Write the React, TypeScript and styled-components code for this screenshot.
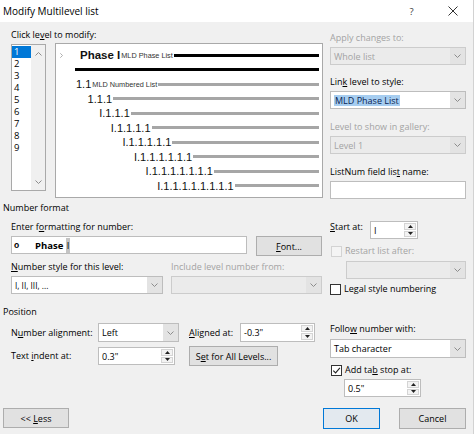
import React from 'react';
import styled, { createGlobalStyle } from 'styled-components';

const GlobalStyle = createGlobalStyle`
  html, body {
    margin: 0;
    padding: 0;
    background: #ffffff;
  }
  *, *::before, *::after {
    box-sizing: border-box;
  }
`;

type PreviewRowData = { level: number; number: string; style?: string };

const LEVELS: Array<string> = ['1', '2', '3', '4', '5', '6', '7', '8', '9'];

const PREVIEW_ROWS: Array<PreviewRowData> = [
  { level: 2, number: '1.1', style: 'MLD Numbered List' },
  { level: 3, number: '1.1.1' },
  { level: 4, number: 'I.1.1.1' },
  { level: 5, number: 'I.1.1.1.1' },
  { level: 6, number: 'I.1.1.1.1.1' },
  { level: 7, number: 'I.1.1.1.1.1.1' },
  { level: 8, number: 'I.1.1.1.1.1.1.1' },
  { level: 9, number: 'I.1.1.1.1.1.1.1.1' },
];

// small drawn glyphs
const Chevron = ({ up }: { up?: boolean }) => (
  <svg width="7" height="4" viewBox="0 0 7 4">
    <path
      d={up ? 'M0.5 3.5 L3.5 0.5 L6.5 3.5' : 'M0.5 0.5 L3.5 3.5 L6.5 0.5'}
      fill="none"
      stroke="#8c8c8c"
      strokeWidth="1"
    />
  </svg>
);

const Triangle = ({ up }: { up?: boolean }) => (
  <svg width="5" height="3" viewBox="0 0 5 3">
    <path d={up ? 'M0 3 L2.5 0 L5 3Z' : 'M0 0 L2.5 3 L5 0Z'} fill="#222" />
  </svg>
);

const CheckMark = () => (
  <svg width="9" height="9" viewBox="0 0 9 9">
    <path d="M1.3 4.6 L3.6 6.9 L7.9 1.8" fill="none" stroke="#222" strokeWidth="1.1" />
  </svg>
);

const CloseIcon = () => (
  <svg width="10" height="10" viewBox="0 0 10 10">
    <path d="M0.5 0.5 L9.5 9.5 M9.5 0.5 L0.5 9.5" stroke="#333" strokeWidth="1" />
  </svg>
);

const RightCaret = () => (
  <svg width="3" height="5" viewBox="0 0 3 5">
    <path d="M0.3 0.3 L2.5 2.5 L0.3 4.7" fill="none" stroke="#9a9a9a" strokeWidth="0.8" />
  </svg>
);

const ComboBox: React.FC<{ width: number; height?: number; disabled?: boolean; children?: React.ReactNode }> = ({
  width,
  height = 18,
  disabled,
  children,
}) => (
  <Combo $w={width} $h={height} $disabled={disabled}>
    <ComboValue $disabled={disabled}>{children}</ComboValue>
    <ComboArrow>
      <Chevron />
    </ComboArrow>
  </Combo>
);

const Spinner: React.FC<{ width: number; height?: number; value: string }> = ({ width, height = 18, value }) => (
  <Spin $w={width} $h={height}>
    <SpinValue>{value}</SpinValue>
    <SpinButtons>
      <SpinButton>
        <Triangle up />
      </SpinButton>
      <SpinButton>
        <Triangle />
      </SpinButton>
    </SpinButtons>
  </Spin>
);

const App: React.FC = () => {
  return (
    <>
      <GlobalStyle />
      <Dialog>
        <TitleBar>
          <Title>Modify Multilevel list</Title>
          <CaptionButton>?</CaptionButton>
          <CaptionButton>
            <CloseIcon />
          </CaptionButton>
        </TitleBar>

        <Body>
          <Section $top={7}>
            <Pane $w={312}>
              <Label>
                Click le<Key>v</Key>el to modify:
              </Label>
              <LevelArea>
                <LevelList>
                  <LevelItems>
                    {LEVELS.map((level, index) => (
                      <LevelItem key={level} $selected={index === 0}>
                        {level}
                      </LevelItem>
                    ))}
                  </LevelItems>
                  <ListScroll>
                    <Chevron up />
                    <Chevron />
                  </ListScroll>
                </LevelList>

                <Preview>
                  <PreviewRow $indent={4}>
                    <CaretBox>
                      <RightCaret />
                    </CaretBox>
                    <PhaseText>Phase I</PhaseText>
                    <StyleTag>MLD Phase List</StyleTag>
                    <Rule $heavy />
                  </PreviewRow>
                  <PreviewRow $indent={18}>
                    <Rule $heavy />
                  </PreviewRow>
                  {PREVIEW_ROWS.map((row) => (
                    <PreviewRow key={row.level} $indent={20 + (row.level - 2) * 11.6}>
                      <NumberText>{row.number}</NumberText>
                      {row.style && <StyleTag>{row.style}</StyleTag>}
                      <Rule />
                    </PreviewRow>
                  ))}
                </Preview>
              </LevelArea>
            </Pane>

            <SideColumn>
              <Field $top={3}>
                <Label $disabled>Apply changes to:</Label>
                <ComboBox width={136} disabled>
                  Whole list
                </ComboBox>
              </Field>
              <Field $top={11}>
                <Label>
                  Lin<Key>k</Key> level to style:
                </Label>
                <ComboBox width={136}>
                  <Selected>MLD Phase List</Selected>
                </ComboBox>
              </Field>
              <Field $top={12}>
                <Label $disabled>Level to show in gallery:</Label>
                <ComboBox width={136} disabled>
                  Level 1
                </ComboBox>
              </Field>
              <Field $top={12}>
                <Label>
                  ListNum field lis<Key>t</Key> name:
                </Label>
                <TextBox $w={136} />
              </Field>
            </SideColumn>
          </Section>

          <GroupHeading $top={3}>Number format</GroupHeading>

          <Section $top={7}>
            <Pane $w={311}>
              <Label>
                Enter f<Key>o</Key>rmatting for number:
              </Label>
              <FormatRow>
                <TextBox $w={236}>
                  <Bullet>o</Bullet>
                  <FormatText>
                    Phase <Shaded>I</Shaded>
                  </FormatText>
                </TextBox>
                <Button $w={66} $h={20}>
                  <span>
                    <Key>F</Key>ont...
                  </span>
                </Button>
              </FormatRow>
              <StyleGrid>
                <Label>
                  <Key>N</Key>umber style for this level:
                </Label>
                <Label $disabled>Include level number from:</Label>
                <ComboBox width={152}>
                  <SmallValue>I, II, III, ...</SmallValue>
                </ComboBox>
                <ComboBox width={151} disabled />
              </StyleGrid>
            </Pane>

            <SideColumn>
              <StartRow>
                <Label $w={40}>
                  <Key>S</Key>tart at:
                </Label>
                <Spinner width={48} value="I" />
              </StartRow>
              <CheckRow $top={6} $shift={1}>
                <Box $disabled />
                <Label $disabled>Restart list after:</Label>
              </CheckRow>
              <Indented $left={16} $top={4}>
                <ComboBox width={120} disabled />
              </Indented>
              <CheckRow $top={4}>
                <Box />
                <Label>
                  Le<Key>g</Key>al style numbering
                </Label>
              </CheckRow>
            </SideColumn>
          </Section>

          <GroupHeading $top={11}>Position</GroupHeading>

          <Section $top={5}>
            <PositionGrid>
              <Label>
                N<Key>u</Key>mber alignment:
              </Label>
              <ComboBox width={81} height={19}>
                Left
              </ComboBox>
              <Label>
                <Key>A</Key>ligned at:
              </Label>
              <Spinner width={75} height={19} value={'-0.3"'} />

              <Label>
                Text <Key>i</Key>ndent at:
              </Label>
              <Spinner width={77} value={'0.3"'} />
              <WideCell>
                <Button $w={89} $h={20}>
                  <span>
                    S<Key>e</Key>t for All Levels...
                  </span>
                </Button>
              </WideCell>
            </PositionGrid>

            <SideColumn>
              <Label>
                Follo<Key>w</Key> number with:
              </Label>
              <Indented $top={4}>
                <ComboBox width={136} height={19}>
                  Tab character
                </ComboBox>
              </Indented>
              <CheckRow $top={6} $shift={1}>
                <Box>
                  <CheckMark />
                </Box>
                <Label>
                  Add ta<Key>b</Key> stop at:
                </Label>
              </CheckRow>
              <Indented $left={14} $top={3}>
                <Spinner width={77} value={'0.5"'} />
              </Indented>
            </SideColumn>
          </Section>

          <Footer>
            <Button $w={66} $h={20}>
              <ButtonText>
                {'<< '}
                <Key>L</Key>ess
              </ButtonText>
            </Button>
            <FooterActions>
              <Button $w={57} $h={21} $default>
                OK
              </Button>
              <Button $w={67} $h={21}>
                Cancel
              </Button>
            </FooterActions>
          </Footer>
        </Body>
      </Dialog>
    </>
  );
};

const Dialog = styled.div`
  display: flex;
  flex-direction: column;
  width: 474px;
  height: 434px;
  overflow: hidden;
  border-right: 1px solid #d2d2d2;
  background-color: #f0f0f0;
  color: #000000;
  font-family: 'Open Sans', 'Noto Sans', sans-serif;
  font-size: 9px;
`;

const TitleBar = styled.div`
  display: flex;
  align-items: center;
  height: 22px;
  padding-left: 3px;
  background-color: #ffffff;
`;

const Title = styled.div`
  flex: 1;
  font-size: 10px;
  line-height: 22px;
`;

const CaptionButton = styled.div`
  display: flex;
  align-items: center;
  justify-content: center;
  width: 41px;
  height: 22px;
  color: #333333;
  font-size: 9.5px;
`;

const Body = styled.div`
  display: flex;
  flex: 1;
  flex-direction: column;
  padding: 0 7px 5px 3px;
`;

const Section = styled.div<{ $top: number }>`
  display: flex;
  justify-content: space-between;
  align-items: flex-start;
  margin-top: ${({ $top }) => $top}px;
  padding-left: 8px;
`;

const Pane = styled.div<{ $w: number }>`
  display: flex;
  flex-direction: column;
  width: ${({ $w }) => $w}px;
`;

const SideColumn = styled.div`
  display: flex;
  flex-direction: column;
  width: 136px;
`;

const GroupHeading = styled.div<{ $top: number }>`
  margin-top: ${({ $top }) => $top}px;
  line-height: 12px;
`;

const Label = styled.div<{ $disabled?: boolean; $w?: number }>`
  flex-shrink: 0;
  width: ${({ $w }) => ($w ? `${$w}px` : 'auto')};
  color: ${({ $disabled }) => ($disabled ? '#a3a3a3' : '#000000')};
  line-height: 12px;
  white-space: nowrap;
`;

const Key = styled.span`
  text-decoration: underline;
  text-underline-offset: 1px;
`;

const Field = styled.div<{ $top: number }>`
  display: flex;
  flex-direction: column;
  gap: 3px;
  margin-top: ${({ $top }) => $top}px;
`;

const LevelArea = styled.div`
  display: flex;
  align-items: flex-start;
  gap: 9px;
  margin-top: 2px;
`;

const LevelList = styled.div`
  display: flex;
  width: 35px;
  height: 147px;
  margin-top: 1px;
  border: 1px solid #a9a9a9;
  background-color: #ffffff;
`;

const LevelItems = styled.div`
  display: flex;
  flex: 1;
  flex-direction: column;
  padding-top: 1px;
`;

const LevelItem = styled.div<{ $selected?: boolean }>`
  height: 12px;
  padding-left: 2px;
  background-color: ${({ $selected }) => ($selected ? '#0078d7' : 'transparent')};
  color: ${({ $selected }) => ($selected ? '#ffffff' : '#000000')};
  font-size: 9.5px;
  line-height: 12px;
`;

const ListScroll = styled.div`
  display: flex;
  flex-direction: column;
  justify-content: space-between;
  align-items: center;
  width: 14px;
  padding: 7px 0 6px;
  background-color: #f0f0f0;
`;

const Preview = styled.div`
  display: flex;
  flex-direction: column;
  width: 268px;
  height: 155px;
  padding: 4px 3px 0 0;
  border: 1px solid #a9a9a9;
  background-color: #ffffff;
  font-family: 'Liberation Sans', Arial, sans-serif;
  color: #111111;
`;

const PreviewRow = styled.div<{ $indent: number }>`
  display: flex;
  align-items: center;
  height: 14.5px;
  padding-left: ${({ $indent }) => $indent}px;
  white-space: nowrap;
`;

const CaretBox = styled.span`
  display: flex;
  width: 20px;
`;

const PhaseText = styled.span`
  font-size: 11.5px;
  font-weight: 700;
`;

const NumberText = styled.span`
  font-size: 11px;
`;

const StyleTag = styled.span`
  margin-left: 1px;
  color: #333333;
  font-size: 7.3px;
`;

const Rule = styled.span<{ $heavy?: boolean }>`
  flex: 1;
  height: 3px;
  margin-left: 1px;
  background-color: ${({ $heavy }) => ($heavy ? '#000000' : '#a6a6a6')};
`;

const Combo = styled.div<{ $w: number; $h: number; $disabled?: boolean }>`
  display: flex;
  width: ${({ $w }) => $w}px;
  height: ${({ $h }) => $h}px;
  border: 1px solid ${({ $disabled }) => ($disabled ? '#cccccc' : '#bdbdbd')};
  background-color: ${({ $disabled }) => ($disabled ? '#ebebeb' : '#ffffff')};
`;

const ComboValue = styled.div<{ $disabled?: boolean }>`
  display: flex;
  flex: 1;
  align-items: center;
  padding-left: 3px;
  color: ${({ $disabled }) => ($disabled ? '#a3a3a3' : '#000000')};
  white-space: nowrap;
`;

const ComboArrow = styled.div`
  display: flex;
  align-items: center;
  justify-content: center;
  width: 15px;
  background-color: #e3e3e3;
`;

const Selected = styled.span`
  padding: 0 1px;
  background-color: #a6cdf0;
  color: #0b2452;
  line-height: 11px;
`;

const SmallValue = styled.span`
  font-size: 8.3px;
`;

const TextBox = styled.div<{ $w: number }>`
  display: flex;
  align-items: center;
  width: ${({ $w }) => $w}px;
  height: 18px;
  padding-left: 2px;
  border: 1px solid #bdbdbd;
  background-color: #ffffff;
`;

const Bullet = styled.span`
  width: 21px;
  font-family: 'Liberation Sans', Arial, sans-serif;
  font-size: 8.5px;
  font-weight: 700;
`;

const FormatText = styled.span`
  font-size: 9.5px;
  font-weight: 700;
  white-space: pre;
`;

const Shaded = styled.span`
  padding: 1px 1px;
  background-color: #c4c4c4;
  font-weight: 400;
`;

const FormatRow = styled.div`
  display: flex;
  align-items: flex-start;
  gap: 9px;
  margin-top: 3px;
`;

const StyleGrid = styled.div`
  display: grid;
  grid-template-columns: 152px 151px;
  column-gap: 8px;
  row-gap: 3px;
  margin-top: 5px;
`;

const Button = styled.div<{ $w: number; $h: number; $default?: boolean }>`
  display: flex;
  align-items: center;
  justify-content: center;
  width: ${({ $w }) => $w}px;
  height: ${({ $h }) => $h}px;
  border: 1px solid ${({ $default }) => ($default ? '#0078d7' : '#adadad')};
  background-color: ${({ $default }) => ($default ? '#e3e9ef' : '#e1e1e1')};
  white-space: nowrap;
`;

const ButtonText = styled.span`
  white-space: pre;
`;

const Spin = styled.div<{ $w: number; $h: number }>`
  display: flex;
  width: ${({ $w }) => $w}px;
  height: ${({ $h }) => $h}px;
  border: 1px solid #bdbdbd;
  background-color: #ffffff;
`;

const SpinValue = styled.div`
  display: flex;
  flex: 1;
  align-items: center;
  padding-left: 3px;
`;

const SpinButtons = styled.div`
  display: flex;
  flex-direction: column;
  gap: 1px;
  width: 13px;
  padding: 1px 1px 1px 0;
`;

const SpinButton = styled.div`
  display: flex;
  flex: 1;
  align-items: center;
  justify-content: center;
  border: 1px solid #d4d4d4;
  background-color: #f3f3f3;
`;

const StartRow = styled.div`
  display: flex;
  align-items: flex-start;
`;

const CheckRow = styled.div<{ $top: number; $shift?: number }>`
  display: flex;
  align-items: center;
  gap: 3px;
  margin-top: ${({ $top }) => $top}px;
  padding-left: ${({ $shift }) => $shift ?? 0}px;
`;

const Box = styled.span<{ $disabled?: boolean }>`
  display: flex;
  align-items: center;
  justify-content: center;
  width: 11px;
  height: 11px;
  border: 1px solid ${({ $disabled }) => ($disabled ? '#d3d3d3' : '#333333')};
  background-color: ${({ $disabled }) => ($disabled ? '#f4f4f4' : '#ffffff')};
`;

const Indented = styled.div<{ $left?: number; $top: number }>`
  margin-top: ${({ $top }) => $top}px;
  padding-left: ${({ $left }) => $left ?? 0}px;
`;

const PositionGrid = styled.div`
  display: grid;
  grid-template-columns: 87px 91px 51px 75px;
  grid-template-rows: 19px 20px;
  row-gap: 4px;
  align-items: center;
`;

const WideCell = styled.div`
  grid-column: 3 / span 2;
`;

const Footer = styled.div`
  display: flex;
  justify-content: space-between;
  align-items: flex-start;
  margin-top: auto;
`;

const FooterActions = styled.div`
  display: flex;
  gap: 19px;
`;

export default App;
